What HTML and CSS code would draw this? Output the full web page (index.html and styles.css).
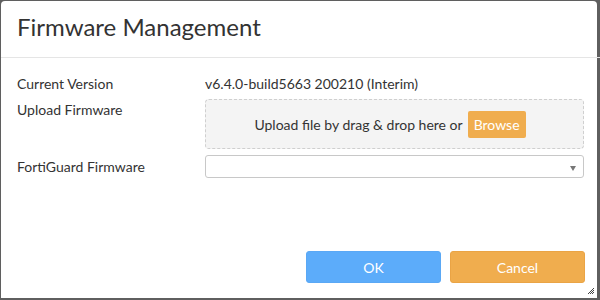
FILE: index.html
```html
<!DOCTYPE html>
<html>
<head>
<meta charset="utf-8">
<link rel="stylesheet" href="styles.css">
</head>
<body>
<div class="dialog">
  <div class="header">Firmware Management</div>
  <div class="body">
    <div class="label">Current Version</div>
    <div class="value">v6.4.0-build5663 200210 (Interim)</div>
    <div class="label label-top">Upload Firmware</div>
    <div class="dropzone">
      <span>Upload file by drag &amp; drop here or</span>
      <span class="browse">Browse</span>
    </div>
    <div class="label">FortiGuard Firmware</div>
    <div class="select"><span class="arrow"></span></div>
  </div>
  <div class="footer">
    <button class="btn btn-ok">OK</button>
    <button class="btn btn-cancel">Cancel</button>
  </div>
  <svg class="grip" width="8" height="8" viewBox="0 0 8 8">
    <path d="M7 1 L1 7 M7 3 L3 7 M7 5 L5 7" stroke="#444" stroke-width="1" fill="none"/>
  </svg>
</div>
</body>
</html>
```
FILE: styles.css
```css
html, body {
  margin: 0;
  padding: 0;
  background: #5f5f5f;
  width: 600px;
  height: 300px;
  overflow: hidden;
}
body {
  font-family: Lato, "Open Sans", sans-serif;
  color: #333;
  padding: 1px 0 0 1px;
  box-sizing: border-box;
}
.dialog {
  position: relative;
  width: 596px;
  height: 297px;
  background: #fff;
  border-radius: 4px 4px 0 0;
  display: flex;
  flex-direction: column;
}
.header {
  border-bottom: 1px solid #e5e5e5;
  font-size: 24px;
  padding-left: 16px;
  margin-right: -3px;
  box-sizing: border-box;
  height: 57px;
  line-height: 52px;
}
.body {
  display: grid;
  grid-template-columns: 188px 379px;
  row-gap: 6px;
  padding: 17px 0 0 16px;
  font-size: 14px;
  align-items: center;
}
.label, .value {
  line-height: 18px;
}
.label-top {
  align-self: start;
  padding-top: 2px;
}
.dropzone {
  height: 50px;
  box-sizing: border-box;
  border: 1px dashed #cfcfcf;
  border-radius: 4px;
  background: #f4f4f4;
  display: flex;
  align-items: center;
  justify-content: center;
  gap: 5px;
  padding-right: 9px;
}
.browse {
  background: #f0ad4e;
  color: #fff;
  border-radius: 2px;
  height: 27px;
  line-height: 27px;
  padding: 0 6px;
  font-size: 14px;
}
.select {
  position: relative;
  height: 23px;
  box-sizing: border-box;
  border: 1px solid #c8c8c8;
  border-radius: 3px;
  background: #fff;
}
.arrow {
  position: absolute;
  right: 7px;
  top: 10px;
  width: 0;
  height: 0;
  border-left: 3.5px solid transparent;
  border-right: 3.5px solid transparent;
  border-top: 5px solid #777;
}
.footer {
  margin-top: auto;
  display: flex;
  justify-content: flex-end;
  gap: 9px;
  padding: 0 12px 15px 0;
}
.btn {
  width: 135px;
  height: 32px;
  border: 1px solid transparent;
  border-radius: 3px;
  color: #fff;
  font-family: Lato, "Open Sans", sans-serif;
  font-size: 14px;
  padding: 0;
}
.btn-ok {
  background: #5cacfa;
  border-color: #5aa8f5;
}
.btn-cancel {
  background: #f0ad4e;
  border-color: #eaa445;
}
.grip {
  position: absolute;
  right: 2px;
  bottom: 3px;
}
```
